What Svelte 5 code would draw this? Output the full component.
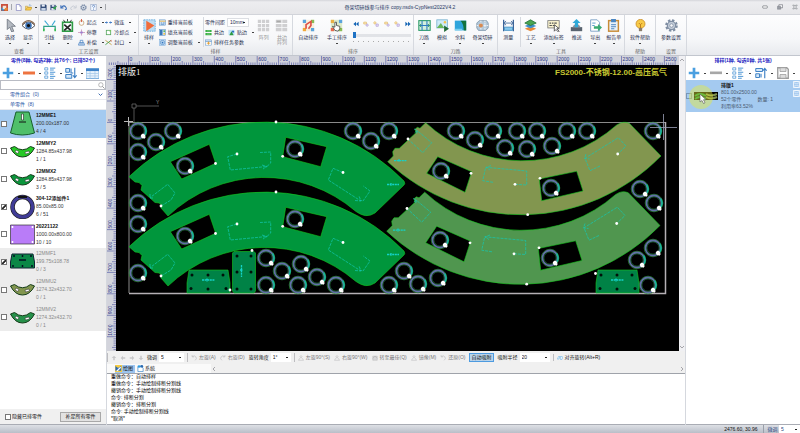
<script lang="ts">
    type Point = [number, number];

    const icons: Record<string, string> = {
        logo: `<rect width="16" height="16" fill="#c9503c"/><path d="M1 8h6v7H1z" fill="#2a8fd0"/><path d="M4 4h8v8H4z" fill="#f4e6d8"/><path d="M9 9h6v6H9z" fill="#e88b32"/>`,
        file: `<path d="M3 1h7l4 4v10H3z" fill="#fff" stroke="#7577b8" stroke-width="1.5"/><path d="M10 1v4h4" fill="none" stroke="#7577b8"/>`,
        folder: `<path d="M1 14V5h5l1 2h7v3" fill="#f5d878" stroke="#b48a26"/><path d="M1 14l4-6h11l-3 6z" fill="#f9c94a" stroke="#b48a26"/><path d="M9 3q3-3 5 1" fill="none" stroke="#4b8ed0" stroke-width="1.5"/>`,
        disk: `<path d="M1 1h12l2 2v12H1z" fill="#2d4774"/><path d="M4 1h7v5H4z" fill="#e8eef8"/><path d="M3 9h10v6H3z" fill="#c7d4e8"/>`,
        diskAs: `<path d="M1 2h12v12H1z" fill="#2d4774"/><path d="M4 2h6v4H4zM3 9h8v5H3z" fill="#dde"/><path d="M15 5l-6 6M9 7v4h4" stroke="#2fa347" stroke-width="2.5" fill="none"/>`,
        undo: `<path d="M2 3v6h6M3 8q6-7 10-1t-2 6" fill="none" stroke="#3c6fb8" stroke-width="2.4"/>`,
        redo: `<path d="M14 3v6H8M13 8Q7 1 3 7t2 6" fill="none" stroke="#c3c8d2" stroke-width="2"/>`,
        help: `<rect x="2" y="1" width="12" height="14" fill="#f4f8ff" stroke="#7088b5"/><path d="M5.500 6q0-3 2.500-3t2.500 2.500q0 2-2.500 3v1.500M8 12v1.500" fill="none" stroke="#3868b0" stroke-width="1.500"/>`,
        gearS: `<circle cx="8" cy="8" r="5" fill="#e7ebf2" stroke="#6c7f9d" stroke-width="2"/><circle cx="8" cy="8" r="7" fill="none" stroke="#6c7f9d" stroke-width="1.5" stroke-dasharray="2.500 3"/><circle cx="8" cy="8" r="2" fill="#6c7f9d"/>`,
        pointer: `<path d="M4 0v13l3-3 2.500 6 2.500-1-2.500-6H14z" fill="#b4b9c1" stroke="#6d747f"/>`,
        eye: `<path d="M0 8q8-9 16 0q-8 9-16 0z" fill="#fff" stroke="#4a4e58" stroke-width="1.200"/><path d="M0 7Q8-3 16 7" fill="none" stroke="#8b6c55" stroke-width="1.500"/><circle cx="8" cy="8" r="4" fill="#3d74b8"/><circle cx="8" cy="8" r="2" fill="#111"/>`,
        lead: `<path d="M1 14v-5h14v5" fill="none" stroke="#2fa08a" stroke-width="1.500"/><path d="M2 2l5 6M15 2l-4 6" stroke="#39a8d5" stroke-width="1.300"/><path d="M1 12v3M15 12v3" stroke="#3bbd52" stroke-width="2"/>`,
        remove: `<rect x="2" y="4" width="12" height="11" fill="none" stroke="#2e9b45" stroke-width="2"/><path d="M4 7l8 7M12 7l-8 7" stroke="#222" stroke-width="2"/><path d="M3 1l2 3M13 1l-2 3M8 0v3" stroke="#222"/>`,
        start: `<circle cx="8" cy="9" r="5.500" fill="none" stroke="#b98c4f" stroke-width="1.500"/><path d="M8 0v7" stroke="#d6523d" stroke-width="2"/>`,
        dock: `<path d="M8 1v14M0 8h16" stroke="#c27aa8" stroke-width="1.500"/><path d="M5 6h6v4H5z" fill="#9b7fd0"/>`,
        comp: `<path d="M1 14h14l-2-6H3z" fill="#d7e6f8" stroke="#3b78bd" stroke-width="1.500"/><path d="M5 8V3h6v5" fill="none" stroke="#3b78bd" stroke-width="1.500"/><path d="M4 11h8" stroke="#2259a0"/>`,
        micro: `<path d="M0 8h4M12 8h4" stroke="#2f6fc0" stroke-width="2"/><path d="M3 5l4 3-4 3zM13 5L9 8l4 3z" fill="#2f6fc0"/>`,
        cool: `<rect x="3" y="3" width="10" height="10" fill="#fff" stroke="#52a35a" stroke-width="1.800"/><circle cx="12" cy="4" r="2" fill="#79c85f"/>`,
        seal: `<path d="M1 3l14 10" stroke="#c2a03c" stroke-width="2"/><path d="M1 13L14 3" stroke="#3e9f4b" stroke-width="2"/><path d="M11 3h4v4z" fill="#d85f4c"/>`,
        nest: `<rect x="1" y="1" width="14" height="14" fill="#bddcf3" stroke="#58a3da" stroke-dasharray="2 1"/><path d="M4 2l10 6-10 7z" fill="#f06c3c"/>`,
        relay: `<rect x="1" y="2" width="14" height="12" fill="#d6e8f8" stroke="#3976b8"/><path d="M1 5h14" stroke="#f0b545" stroke-width="2"/><path d="M4 9h3M9 9h4M4 12h8" stroke="#3976b8" stroke-width="1.500"/>`,
        fill: `<rect x="1" y="1" width="14" height="14" fill="#d6e8f8" stroke="#3976b8"/><path d="M2 2h6v12H2z" fill="#3976b8"/><path d="M10 3h4v4h-4z" fill="#5ab564"/><path d="M10 9h4v4h-4z" fill="#f3c24b"/>`,
        adjust: `<rect x="1" y="1" width="14" height="14" fill="#e2effb" stroke="#5c9ad4"/><path d="M4 4h8v8H4z" fill="none" stroke="#2e74bf" stroke-width="1.500"/><circle cx="8" cy="8" r="2" fill="#2e74bf"/>`,
        common: `<path d="M1 2h14v5H1zM1 9h14v5H1z" fill="#35ae3f"/><path d="M4 4.500h8M4 11.500h8" stroke="#d4f2d4"/>`,
        hug: `<path d="M1 2h14v12H1z" fill="#bfe3f7"/><path d="M3 14l5-9 5 9z" fill="#2c9b42"/><path d="M9 4h5v4H9z" fill="#2f6fc0"/>`,
        task: `<rect x="1" y="2" width="14" height="12" fill="#fff" stroke="#4a86c2"/><path d="M1 5h14" stroke="#4a86c2" stroke-width="2"/><path d="M8 6v7M4 9.500h8" stroke="#e39b2c" stroke-width="2"/>`,
        array: `<path d="M1 1h4v4H1zM6 1h4v4H6zM11 1h4v4h-4zM1 6h4v4H1zM6 6h4v4H6zM11 6h4v4h-4zM1 11h4v4H1zM6 11h4v4H6zM11 11h4v4h-4z" fill="#cfcfd1"/>`,
        arrayC: `<path d="M1 1h7v4H1zM9 1h6v4H9zM1 6h7v4H1zM9 6h6v4H9zM1 11h7v4H1zM9 11h6v4H9z" fill="#cfcfd1"/><path d="M2 2h5v2H2z" fill="#aaa"/>`,
        autoSort: `<rect x="1" y="1" width="14" height="14" fill="#f8efdc"/><path d="M1 1h4v4H1zM11 11h4v4h-4z" fill="#5aa4dc"/><path d="M11 1h4v4h-4z" fill="#88bc55"/><path d="M1 11h4v4H1z" fill="#f1a83a"/><path d="M5 12V7l6-4v5l-3 4" fill="none" stroke="#df4e45" stroke-width="2"/>`,
        handSort: `<rect x="1" y="1" width="14" height="14" fill="#dceaca"/><path d="M1 1h4v4H1z" fill="#e9b045"/><path d="M11 1h4v4h-4z" fill="#5aa4dc"/><path d="M1 11h4v4H1z" fill="#e7694d"/><path d="M11 11h4v4h-4z" fill="#88bc55"/><path d="M6 14l-3-5 3 1V4h2v4l4 1v3l-2 3z" fill="#fff" stroke="#444"/>`,
        first: `<path d="M8 2v12L1 8zM15 2v12L8 8z" fill="#1565b5"/>`,
        last: `<path d="M1 2v12l7-6zM8 2v12l7-6z" fill="#1565b5"/>`,
        stepA: `<path d="M2 3h7v5H2z" fill="#fff3d0" stroke="#d9a53e" stroke-width="1.500"/><circle cx="11" cy="11" r="3" fill="#efe7ff" stroke="#9d87cc" stroke-width="1.500"/>`,
        stepB: `<circle cx="5" cy="5" r="3" fill="#fff3d0" stroke="#d9a53e" stroke-width="1.500"/><path d="M8 8h6v6H8z" fill="#efe7ff" stroke="#9d87cc" stroke-width="1.500"/>`,
        toolpath: `<rect x="1" y="2" width="14" height="12" fill="#d3f0df" stroke="#2d9c68" stroke-width="1.300"/><path d="M5 2v12M11 2v12M2 8h12" stroke="#2d7dc0" stroke-width="1.300"/><path d="M4 6l-2 2 2 2M12 6l2 2-2 2" fill="none" stroke="#188a45"/>`,
        simulate: `<rect x="1" y="1" width="13" height="10" fill="#cdeaf8" stroke="#79b2cf"/><path d="M1 11l5-6 4 6z" fill="#68b659"/><path d="M10 8l6 4-6 4z" fill="#216b37"/><circle cx="11" cy="4" r="1.500" fill="#f3c24b"/>`,
        remnant: `<rect x="1" y="2" width="14" height="12" fill="#2fa5dc"/><path d="M8 2h7v12h-3q0-8-4-12z" fill="#12733e"/><path d="M1 12h9v2H1z" fill="#78d0f0"/>`,
        skeleton: `<path d="M1 5l3-3h9l2 3v6l-3 3H3l-2-3z" fill="#b5c9da" stroke="#7d95aa"/><path d="M1 8h14M6 2v12M11 2v12" stroke="#fff" stroke-dasharray="2 1"/><circle cx="6" cy="8" r="2.500" fill="#d68a52"/>`,
        measure: `<path d="M2 1v14M14 1v14" stroke="#3a6398" stroke-width="1.500"/><path d="M2 5h12M5 2.500L2 5l3 2.500M11 2.500L14 5l-3 2.500" fill="none" stroke="#3a6398"/><path d="M3 10h10v4H3z" fill="#86c8ed" stroke="#3a8ac0"/>`,
        layers: `<path d="M1 12l7-3 7 3-7 3z" fill="#e98b3b"/><path d="M1 8.500l7-3 7 3-7 3z" fill="#3a8fd0"/><path d="M1 5l7-4 7 4-7 3z" fill="#4aa552" stroke="#28743a"/>`,
        tag: `<rect x="1" y="2" width="14" height="9" fill="#fbf4cf" stroke="#777"/><path d="M3 5h2M6 5h2M9 5h3M3 8h3M7 8h3" stroke="#555" stroke-width="1.500"/><path d="M9 7v8l2-2 3 3 1-1-3-3h3z" fill="#fff" stroke="#444"/>`,
        push: `<path d="M1 10h14v5H1z" fill="#59636f"/><path d="M3 10l2-3h6l2 3z" fill="#89939f"/><path d="M6 10V5H3l5-5 5 5h-3v5z" fill="#2fa9d8"/>`,
        exportI: `<path d="M2 1h8l3 3v11H2z" fill="#fff" stroke="#6c95bf"/><path d="M4 5h4M4 8h3" stroke="#3a8ac0"/><path d="M6 9h5V6l5 4.500-5 4.500v-3H6z" fill="#39aa72"/>`,
        report: `<rect x="2" y="2" width="12" height="13" fill="#e8f2fb" stroke="#c98c37" stroke-width="1.800"/><path d="M5 0h6v4H5z" fill="#4a86c2"/><path d="M5 7h6M5 9.500h6M5 12h4" stroke="#4a86c2" stroke-width="1.200"/>`,
        bulb: `<circle cx="8" cy="6" r="5.500" fill="#f8ca48" stroke="#c78a22"/><path d="M6 11h4v4H6z" fill="#8a7d6c"/><path d="M6 5l2 2 2-2M8 7v4" stroke="#b46f12" fill="none"/>`,
        gear: `<circle cx="8" cy="8" r="6" fill="none" stroke="#7f8ea3" stroke-width="3.500" stroke-dasharray="2.700 2"/><circle cx="8" cy="8" r="5" fill="#c7d0dc" stroke="#7f8ea3" stroke-width="1.500"/><circle cx="8" cy="8" r="2.200" fill="#f5f6f8" stroke="#7f8ea3"/>`,
        plus: `<path d="M6.200 1h3.600v5.200H15v3.600H9.800V15H6.200V9.800H1V6.200h5.200z" fill="#4a9fe0"/>`,
        minus: `<path d="M0 6h16v4H0z" fill="#ee7440"/>`,
        minusG: `<path d="M0 6h16v3.500H0z" fill="#a7a7a7"/>`,
        rows: `<path d="M1 1h4v3H1zM1 6.500h4v3H1zM1 12h4v3H1z" fill="#fff" stroke="#4b94d4"/><path d="M8 1.500h7M8 4h5M8 7h7M8 9.500h5M8 12.500h7M8 15h5" stroke="#4b94d4" stroke-width="1.300"/>`,
        sortDown: `<path d="M1 2h5v5H1zM1 10h8v5H1z" fill="#d5e8f8" stroke="#3c7fc4" stroke-width="1.300"/><path d="M8 2v6h3M13 1v13M10.500 11l2.500 3 2.500-3" fill="none" stroke="#3c7fc4" stroke-width="1.500"/>`,
        sortUp: `<path d="M1 2h9v4H1zM1 9h5v5H1z" fill="#d5e8f8" stroke="#3c7fc4" stroke-width="1.300"/><path d="M13 15V2M10.500 5L13 2l2.500 3M8 9v5" fill="none" stroke="#3c7fc4" stroke-width="1.500"/>`,
        table: `<rect x="0" y="2" width="16" height="12" fill="#e9f3fc" stroke="#5e9dd6"/><path d="M0 2h16v3H0z" fill="#3f83c8"/><path d="M0 8h16M0 11h16M5 5v9M11 5v9" stroke="#a9cbea"/>`,
        save: `<path d="M1 1h12l2 2v12H1z" fill="#fff" stroke="#9b9b9b" stroke-width="1.800"/><path d="M4 1h8v5H4zM4 10h8v5H4z" fill="#ddd" stroke="#9b9b9b"/>`,
        saveW: `<path d="M1 1h14v14H1z" fill="none" stroke="#fff" stroke-width="1.800"/><path d="M4 1h8v5H4zM4 10h8v5H4z" fill="none" stroke="#fff"/>`,
        search: `<circle cx="6.500" cy="6.500" r="5" fill="none" stroke="#8b8b8b" stroke-width="1.300"/><path d="M10 10l5 5" stroke="#8b8b8b" stroke-width="2"/>`,
        up: `<path d="M8 2l6 6h-4v6H6V8H2z" fill="#c6c6c8"/>`,
        left: `<path d="M2 8l6-6v4h6v4H8v4z" fill="#c6c6c8"/>`,
        right: `<path d="M14 8l-6 6v-4H2V6h6V2z" fill="#c6c6c8"/>`,
        down: `<path d="M8 14L2 8h4V2h4v6h4z" fill="#c6c6c8"/>`,
        rotL: `<path d="M4 4q5-4 9 1t-2 9M3 0v5h5" fill="none" stroke="#b4b4b6" stroke-width="1.500"/>`,
        rotR: `<path d="M12 4Q7 0 3 5t2 9M13 0v5H8" fill="none" stroke="#b4b4b6" stroke-width="1.500"/>`,
        tri: `<path d="M1 14h14L8 5zM4 4q4-4 8 0" fill="none" stroke="#b9b9bb" stroke-width="1.500"/>`,
        best: `<path d="M2 3h12v11H2z" fill="#d8d8da" stroke="#aaa"/><path d="M2 9l6-6 6 6" fill="none" stroke="#999"/>`,
        align: `<path d="M1 11L4 4h4l-3 7zM9 12V4h5q2 4-1 8z" fill="#eaf5fd" stroke="#5ba9df" stroke-width="1.300"/>`,
        pen: `<rect width="16" height="16" fill="#f5cb44"/><path d="M1 2l6 5 7-5v11H1z" fill="#2a68b4"/><path d="M3 13l9-9 2 2-8 8z" fill="#fff"/>`,
        sys: `<path d="M2 3h8l4 4v8H2z" fill="#fff" stroke="#2c7fc7" stroke-width="1.500"/><path d="M2 1h6v5H2z" fill="#2c9ae0"/><circle cx="11" cy="3" r="3" fill="#2a69b0"/>`,
        winMin: `<rect x="2" y="5" width="12" height="6" rx="1" fill="#fff" stroke="#6f7279" stroke-width="1.800"/>`,
        winMax: `<path d="M5 2h10v8H5z" fill="#fff" stroke="#6b6f78" stroke-width="1.800"/><path d="M1 6h9v8H1z" fill="#999da5" stroke="#6b6f78"/>`,
        winClose: `<path d="M2 3h4l2 3 2-3h4l-4 5 4 5h-4l-2-3-2 3H2l4-5z" fill="#fff" stroke="#6f7279" stroke-width="1.500"/>`
    };

    const smallCraftA = [["start", "起点", true], ["dock", "停靠", false], ["comp", "补偿", true]] as const;
    const smallCraftB = [["micro", "微连", true], ["cool", "冷却点", true], ["seal", "封口", true]] as const;
    const smallNest = [["relay", "重排当前板", false], ["fill", "填充当前板", false], ["adjust", "调整当前板", true]] as const;
    const pathTools = [["toolpath", "刀路", true], ["simulate", "模拟", false], ["remnant", "余料", true], ["skeleton", "骨架切碎", true]] as const;
    const tools = [["layers", "工艺", true], ["tag", "添加标签", true], ["push", "推送", false], ["exportI", "导出", true], ["report", "报告单", true]] as const;

    const parts = [
        { name: "12MME1", size: "200.00x187.00", count: "4 / 4", kind: "skirt", color: "#4fbf6a", checked: false },
        { name: "12MMY2", size: "1284.85x437.98", count: "1 / 1", kind: "arc", color: "#26c926", checked: false },
        { name: "12MMX2", size: "1284.85x437.98", count: "3 / 5", kind: "arc", color: "#0a963c", checked: false },
        { name: "304-12添加件1", size: "85.00x85.00", count: "6 / 51", kind: "ring", color: "#403c96", checked: true },
        { name: "20221122", size: "1000.00x800.00", count: "10 / 10", kind: "rect", color: "#b97cf8", checked: false },
        { name: "12MMF1", size: "199.75x108.78", count: "0 / 3", kind: "plate", color: "#0b8746", checked: true, done: true },
        { name: "12MMU2", size: "1274.32x432.70", count: "0 / 1", kind: "arc", color: "#82964f", checked: false, done: true },
        { name: "12MMV2", size: "1274.32x432.70", count: "0 / 1", kind: "arc", color: "#26914a", checked: false, done: true }
    ];

    const log = [
        "重做命令：自动排样",
        "重做命令：手动绘制排断分割线",
        "撤销命令：手动绘制排断分割线",
        "命令: 排断分割",
        "撤销命令：排断分割",
        "命令: 手动绘制排断分割线",
        "*取消*"
    ];

    // sheet origin and scale: 100 mm is a bit over 21 units on the canvas
    const ox = 128.6;
    const oy = 122.4;
    const step = 21.43;

    const hMarks = Array.from({ length: 26 }, (_, i) => ({ label: i * 100, at: ox + i * step }));
    const vMarks = Array.from({ length: 13 }, (_, i) => ({ label: (i - 2) * 100, at: oy + (i - 2) * step }));

    let hTicks = "";
    for (let i = -9; i < 256; i++) hTicks += `M${(ox + i * step / 10).toFixed(1)} 65v-${i % 10 === 0 ? 9 : i % 5 === 0 ? 4 : 2.5}`;
    let vTicks = "";
    for (let i = -26; i < 107; i++) vTicks += `M116 ${(oy + i * step / 10).toFixed(1)}h-${i % 10 === 0 ? 9 : i % 5 === 0 ? 4 : 2.5}`;

    const rings: Point[] = [
        [138, 131], [173, 131], [156, 142], [138, 152], [185, 166], [295, 149], [185, 236], [295, 219],
        [138, 203], [138, 224], [138, 273], [266, 258], [282, 271], [301, 264], [317, 277], [266, 285],
        [298, 285], [336, 285], [389, 285], [404, 271], [418, 284], [438, 278], [353, 131], [371, 141],
        [389, 131], [456, 131], [475, 140], [493, 131], [517, 131], [537, 131], [567, 131], [587, 131],
        [505, 148], [527, 149], [552, 146], [653, 131], [640, 189], [654, 203], [653, 248], [637, 260],
        [648, 285], [441, 171], [551, 188], [440, 240], [550, 258]
    ];

    const archBody = "M129 176.7A195 195 0 0 1 404 181Q406 184 403 186L375 213Q366 219 356 211.5A140 140 0 0 0 168 216L161 208 162 205 159 203 155 202.5 141 190 142 185.5 139 182.500 135 182ZM170.3 161.7L181.7 179 215.7 163.3 209.3 144.3ZM285.7 137.3L282.7 156.7 320.7 166.7 326.7 146.7Z";
    const archMarks = "M237 154L227.700 156.700 230.300 170 267 166.500 270.700 163V152L260 152.500M262 165l5 1.500-4 2.500M161 206L171 200 175 193 167.700 184.300 150 197.700M150 194v4h4M343 172.500L333 168.300 328.300 180 359.300 200 363 201 370 191 363.300 186M355 200.500l6 .5-2-5";
    const archDots: Point[] = [[276, 122], [215.5, 163.5], [237, 154], [282.7, 156.3], [343, 172.5], [161, 206]];

    const bowlBody = "M387.700 161.700A195 195 0 0 0 661 156L629.300 123.300Q623 120.500 616.700 125A142 142 0 0 1 425.700 122.700L420 128.300 417.300 127.300 415 129.300 416 132.700 399.300 148.300H395L392.700 151.700 393.300 156ZM437.700 156.700L471.700 171.700 465 192.300 426.700 173.300ZM539.300 179L576.700 171.300 583 191 541.700 200.700Z";
    const bowlMarks = "M408 139L422.700 152.700 431.700 142.700 417.300 130.700 414 133M414 129l3.500 1.500-1 4M493 182.300L482.700 180.700 485.700 167.300 526.700 171V185L515 184.300M491 165.500l-5 2 4 2.500M600 166L590 170.700 585 158.300 618.300 137.700 626 146 617.700 154M586 154l-1.500 4.500 5 .5";
    const bowlDots: Point[] = [[527.7, 214.700], [471, 173.3], [408, 139], [515, 184.3], [540, 178.3], [617.7, 154]];

    const plateDots: Point[] = [[4, 5], [20, 5], [35, 5], [3, 18.500], [20, 19], [38, 18.5]];
    const thumbs = [[0, "#0a963c"], [1, "#82964f"]] as const;

    let hidePlaced = $state(false);
    let query = $state("");
    let speed = $state(0);
    let layoutChecked = $state(false);
</script>

{#snippet icon(name: string, size: string)}
    <svg class="icon {size}" viewBox="0 0 16 16" aria-hidden="true">{@html icons[name]}</svg>
{/snippet}

{#snippet big(name: string, label: string, menu: boolean)}
    <button class="big" class:wide={label.length > 3}>
        {@render icon(name, "i13")}
        <span>{label}</span>
        {#if menu}<i class="caret"></i>{/if}
    </button>
{/snippet}

{#snippet small(name: string, label: string, menu: boolean)}
    <button class="small">
        {@render icon(name, "i7")}
        <span>{label}</span>
        {#if menu}<i class="caret"></i>{/if}
    </button>
{/snippet}

{#snippet tool(name: string)}
    <button class="tool" aria-label={name}>{@render icon(name, "i12")}</button>
    <i class="caret"></i>
{/snippet}

{#snippet arch(dy: number)}
    <g transform="translate(0 {dy})">
        <path d={archBody} fill="#00963c" fill-rule="evenodd" stroke="#16c81e" stroke-width=".6" />
        <path d={archMarks} class="marks" />
        <path d="M387 184.500h12M391 183v3" class="label-mark" />
        {#each archDots as [x, y]}<circle cx={x} cy={y} r="1.400" fill="#fff" />{/each}
    </g>
{/snippet}

{#snippet bowl(dx: number, dy: number, fill: string)}
    <g transform="translate({dx} {dy})">
        <path d={bowlBody} {fill} fill-rule="evenodd" stroke="#16c81e" stroke-width=".6" />
        <path d={bowlMarks} class="marks" />
        <path d="M394 160.700h13M399 159v3" class="label-mark" />
        {#each bowlDots as [x, y]}<circle cx={x} cy={y} r="1.400" fill="#fff" />{/each}
    </g>
{/snippet}

{#snippet plate(x: number, y: number)}
    <g transform="translate({x} {y})">
        <path d="M2 0H41L43 13V23H0V13Z" fill="#008246" stroke="#16c81e" stroke-width=".6" />
        {#each plateDots as [px, py]}<circle cx={px + 1} cy={py} r="1.500" fill="#001008" />{/each}
        <path d="M15 10h13M20 8.500v3" class="label-mark" />
    </g>
{/snippet}

<div class="app">
    <header class="titlebar">
        <div class="quick">
            {@render icon("logo", "i7")}
            <i class="bar"></i>
            {@render icon("file", "i7")}
            {@render icon("folder", "i7")}
            <i class="caret"></i>
            {@render icon("disk", "i7")}
            {@render icon("diskAs", "i7")}
            {@render icon("undo", "i7")}
            {@render icon("redo", "i7")}
            {@render icon("gearS", "i7")}
            {@render icon("help", "i7")}
            <i class="caret"></i>
            <i class="bar"></i>
        </div>
        <h1>骨架切碎线参与排序 copy.nsds-CypNest2022V4.2</h1>
        <div class="window-buttons">
            {@render icon("winMin", "i6")}
            {@render icon("winMax", "i6")}
            {@render icon("winClose", "i6")}
        </div>
    </header>

    <nav class="ribbon">
        <section>
            <div class="tools">
                {@render big("pointer", "选择", true)}
                {@render big("eye", "显示", true)}
            </div>
            <h2>查看</h2>
        </section>
        <section>
            <div class="tools">
                {@render big("lead", "引线", true)}
                {@render big("remove", "删除", true)}
                <div class="stack">
                    {#each smallCraftA as [i, label, menu]}{@render small(i, label, menu)}{/each}
                </div>
                <div class="stack">
                    {#each smallCraftB as [i, label, menu]}{@render small(i, label, menu)}{/each}
                </div>
            </div>
            <h2>工艺设置</h2>
        </section>
        <section>
            <div class="tools">
                {@render big("nest", "排样", true)}
                <div class="stack split">
                    {#each smallNest as [i, label, menu]}{@render small(i, label, menu)}{/each}
                </div>
                <div class="stack">
                    <label class="small">零件间距
                        <select><option>10mm</option></select>
                    </label>
                    <div class="pair">
                        {@render small("common", "共边", false)}
                        {@render small("hug", "贴边", true)}
                    </div>
                    {@render small("task", "排样任务参数", false)}
                </div>
                <button class="big" disabled>{@render icon("array", "i13")}<span>阵列</span></button>
                <button class="big" disabled>{@render icon("arrayC", "i13")}<span>共边<br />阵列</span></button>
            </div>
            <h2>排样</h2>
        </section>
        <section>
            <div class="tools">
                {@render big("autoSort", "自动排序", false)}
                {@render big("handSort", "手工排序", true)}
                <div class="order">
                    <div class="steps">
                        {#each ["first", "stepA", "stepB", "stepA", "stepB", "last"] as s}{@render icon(s, "i6")}{/each}
                    </div>
                    <input type="range" min="0" max="100" bind:value={speed} aria-label="排序" />
                    <div class="dots"></div>
                </div>
            </div>
            <h2>排序</h2>
        </section>
        <section>
            <div class="tools">
                {#each pathTools as [i, label, menu]}{@render big(i, label, menu)}{/each}
            </div>
            <h2>刀路</h2>
        </section>
        <section>
            <div class="tools">
                <div class="split">{@render big("measure", "测量", false)}</div>
                {#each tools as [i, label, menu]}{@render big(i, label, menu)}{/each}
            </div>
            <h2>工具</h2>
        </section>
        <section>
            <div class="tools">{@render big("bulb", "软件帮助", true)}</div>
            <h2>帮助</h2>
        </section>
        <section>
            <div class="tools">{@render big("gear", "参数设置", false)}</div>
            <h2>设置</h2>
        </section>
    </nav>

    <main>
        <aside class="parts">
            <h3>零件(8种, 勾选2种; 共76个; 已排52个)</h3>
            <div class="toolbar">
                {@render tool("plus")}
                {@render tool("minus")}
                {@render tool("rows")}
                {@render tool("sortDown")}
                <button class="tool" aria-label="table">{@render icon("table", "i13")}</button>
            </div>
            <label class="search">
                <input type="text" bind:value={query} aria-label="搜索" />
                {@render icon("search", "i7")}
            </label>
            <div class="category">零件组合&nbsp; (0) <svg viewBox="0 0 8 6"><path d="M1 1l3 3 3-3" /></svg></div>
            <div class="category">单零件&nbsp; (8)</div>
            <ul>
                {#each parts as part, i}
                    <li class:selected={i === 0} class:done={part.done}>
                        <input type="checkbox" checked={part.checked} aria-label={part.name} />
                        <svg class="thumb" viewBox="0 0 25 25">
                            {#if part.kind === "skirt"}
                                <path d="M6 1H19L24.500 22Q12 26 .5 22Z" fill={part.color} stroke="#165e2b" />
                                <path d="M11.500 3h2v6h-2z" fill="#fff" stroke="#222" stroke-width=".6" />
                                <path d="M9 11h7" stroke="#111" />
                            {:else if part.kind === "arc"}
                                <path d="M.5 9L4.500 7.500Q12.500 14 20.500 7.500L24.500 9Q20 18 12.500 18T.5 9Z" fill={part.color} stroke="#173d1b" />
                                <path d="M6 11l3 1.500-1 2-3-1.500zM15 13l4-1 .5 2-4 1z" fill="#fff" stroke="#222" stroke-width=".5" />
                            {:else if part.kind === "ring"}
                                <circle cx="12.500" cy="13" r="10" fill="#fff" stroke="#222" stroke-width="4.500" />
                                <circle cx="12.500" cy="13" r="10" fill="none" stroke={part.color} stroke-width="3.200" />
                                <path d="M8 2h9v2H8z" fill="#111" />
                            {:else if part.kind === "rect"}
                                <path d="M.5 3h24v19H.5z" fill={part.color} stroke="#333" stroke-width=".7" />
                                <path d="M2.500 4v2M22.500 4v2M2.500 19v2M22.500 19v2" stroke="#fff" stroke-width="1.500" />
                            {:else}
                                <path d="M2 5H23L24.500 13V19H.5V13Z" fill={part.color} stroke="#123" />
                                <path d="M4 6v2M21 6v2M3 16v2M22 16v2M12.500 6v2M12.500 16v2M9 11h7" stroke="#012" stroke-width="1.500" />
                            {/if}
                        </svg>
                        <div class="info">
                            <b>{part.name}</b>
                            <span>{part.size}</span>
                            <span>{part.count}</span>
                        </div>
                    </li>
                {/each}
            </ul>
            <footer>
                <label><input type="checkbox" bind:checked={hidePlaced} />隐藏已排零件</label>
                <button>补足所有零件</button>
            </footer>
        </aside>

        <div class="center">
            <div class="workspace">
                <svg class="ruler-h" viewBox="107 56 572 9" preserveAspectRatio="xMinYMin">
                    <path d={hTicks} class="tick" />
                    {#each hMarks as m}<text x={m.at + 1} y="61">{m.label}</text>{/each}
                </svg>
                <svg class="ruler-v" viewBox="107 65 9 286" preserveAspectRatio="xMinYMin">
                    <path d={vTicks} class="tick" />
                    {#each vMarks as m}<text transform="translate(112 {m.at - 1}) rotate(-90)">{m.label}</text>{/each}
                </svg>
                <svg class="canvas" viewBox="116 65 563 286" preserveAspectRatio="xMinYMin">
                    <text x="118" y="75" class="sheet-name">排版1</text>
                    <text x="555" y="75" class="sheet-info">FS2000-不锈钢-12.00-高压氮气</text>
                    <path d="M132 104h4v4h-4zM136 106h23M134 108v14" class="axis" />
                    <text x="156" y="104" class="axis-name">Y</text>
                    <path d="M129 293V122.500H665.500" fill="none" stroke="#8a8a8a" />
                    <path d="M129 293.500H665.500V122" fill="none" stroke="#b5b0b5" stroke-width="1.500" />
                    {@render bowl(0, 0, "#82964f")}
                    {@render bowl(-1, 69.5, "#50964f")}
                    {@render arch(0)}
                    {@render arch(70)}
                    {@render plate(187, 270)}
                    {@render plate(596, 270)}
                    <path d="M234 251.500H254L255.500 253V291L254 293H234L232.500 291V253Z" fill="#008246" stroke="#16c81e" stroke-width=".6" />
                    {#each [256, 272, 289] as y}
                        <circle cx="237" cy={y} r="1.500" fill="#001008" />
                        <circle cx="251" cy={y} r="1.500" fill="#001008" />
                    {/each}
                    <path d="M241.500 265v12M240 270h3" class="label-mark" />
                    <circle cx="252" cy="250.500" r="1.400" fill="#fff" />
                    <circle cx="230" cy="290" r="1.400" fill="#fff" />
                    <circle cx="595.500" cy="273.500" r="1.400" fill="#fff" />
                    {#each rings as [x, y]}
                        <g transform="translate({x} {y})">
                            <circle r="8.800" fill="none" stroke="#2c9a34" stroke-width=".7" />
                            <circle r="7.500" fill="none" stroke="#6270a8" stroke-width="1.800" />
                            <circle r="6.200" fill="none" stroke="#2f9a50" stroke-width=".6" />
                            <path d="M6.500-4.500A8 8 0 0 1 7 4" fill="none" stroke="#16b99a" stroke-width="1.500" />
                            <path d="M3.500 3.500L7 7M3.500 6.500l3-3" stroke="#fff" stroke-width="2.500" />
                        </g>
                    {/each}
                    <path d="M124 121.500h9M128.500 117v9" stroke="#b8b8b8" />
                    <path d="M650 127.500h27M663.500 114v26" stroke="#9aa0b8" stroke-width=".8" />
                </svg>
                <div class="scroll-v">
                    <svg viewBox="0 0 6 6"><path d="M1 4l2-2 2 2" /></svg>
                    <svg viewBox="0 0 6 6"><path d="M1 2l2 2 2-2" /></svg>
                </div>
            </div>

            <div class="actions">
                <div class="cluster">
                    {#each ["up", "left", "right", "down"] as a}
                        <button aria-label={a}>{@render icon(a, "i6")}</button>
                    {/each}
                    <label>微调 <select><option>5</option></select></label>
                </div>
                <div class="cluster">
                    <button disabled>{@render icon("rotL", "i6")}左旋(A)</button>
                    <button disabled>{@render icon("rotR", "i6")}右旋(D)</button>
                    <label>旋转角度 <select class="short"><option>1°</option></select></label>
                </div>
                <div class="cluster">
                    <button disabled>{@render icon("tri", "i6")}左旋90°(S)</button>
                    <button disabled>{@render icon("tri", "i6")}右旋90°(W)</button>
                    <button disabled>{@render icon("best", "i6")}转至最佳(Q)</button>
                    <button disabled>{@render icon("tri", "i6")}镜像(M)</button>
                    <button disabled>{@render icon("rotL", "i6")}还原(O)</button>
                    <button class="on">自动吸附</button>
                    <label>吸附半径 <select class="long"><option>20</option></select></label>
                </div>
                <div class="cluster">
                    <button>{@render icon("align", "i6")}对齐旋转(Alt+R)</button>
                </div>
            </div>

            <div class="tabs">
                <button class="active">{@render icon("pen", "i7")}绘图</button>
                <button>{@render icon("sys", "i7")}系统</button>
                <div class="scroll-h">
                    <svg viewBox="0 0 6 6"><path d="M4 1L2 3l2 2" /></svg>
                    <svg viewBox="0 0 6 6"><path d="M2 1l2 2-2 2" /></svg>
                </div>
            </div>
            <div class="log">
                {#each log as line}<p>{line}</p>{/each}
            </div>
        </div>

        <aside class="layouts">
            <h3>排样(1种, 勾选0种, 共1张)</h3>
            <div class="toolbar">
                {@render tool("plus")}
                {@render tool("minusG")}
                {@render tool("rows")}
                {@render tool("sortUp")}
                {@render tool("save")}
            </div>
            <div class="layout-item">
                <input type="checkbox" bind:checked={layoutChecked} aria-label="排版1" />
                <div class="preview">
                    <svg viewBox="0 0 24 8">
                        <rect width="24" height="8" fill="#000" />
                        {#each thumbs as [i, color]}
                            <g fill="none" stroke={color} stroke-width="2">
                                <path d={i === 0 ? "M1 4q5-4 11 0M1 7q5-4 11 0" : "M12 2q5 3 11 0M12 5q5 3 11 0"} />
                            </g>
                        {/each}
                    </svg>
                    <svg class="cursor" viewBox="0 0 26 26">
                        <circle cx="13" cy="13" r="12" fill="#e6ec3c" opacity=".45" />
                        <path d="M12 10v8l2-1.500 1.500 3 1.500-.7-1.500-3H18z" fill="#fff" stroke="#555" stroke-width=".6" />
                    </svg>
                </div>
                <div class="info">
                    <b>排版1</b>
                    <span>801.00x2500.00</span>
                    <span class="spread">52个零件 <em>数量: 1</em></span>
                    <span>利用率63.52%</span>
                </div>
                <div class="item-tools">
                    {@render icon("saveW", "i7")}
                    {@render icon("saveW", "i7")}
                </div>
            </div>
        </aside>
    </main>

    <div class="status">
        <span>2476.60, 30.96</span>
        <label>微调 <select><option>5</option></select></label>
    </div>
</div>

<style>
    :global(body) {
        margin: 0;
    }

    .app {
        display: flex;
        flex-direction: column;
        height: 100vh;
        overflow: hidden;
        background: #eceef2;
        color: #111;
        font-family: "Liberation Sans", "Noto Sans CJK SC", sans-serif;
        font-size: 5px;
        line-height: 7px;
        white-space: nowrap;
    }

    h1, h2, h3, p, ul {
        margin: 0;
        padding: 0;
        font-size: 5px;
        font-weight: normal;
    }

    button, select, input {
        margin: 0;
        padding: 0;
        border: 0;
        border-radius: 0;
        background: none;
        color: inherit;
        font-family: inherit;
        font-size: 5px;
        line-height: 7px;
    }

    select {
        appearance: none;
        width: 25px;
        height: 9px;
        padding-left: 2px;
        background: linear-gradient(#222, #222) no-repeat right 3px center / 2px 1px, #fff;
    }

    input[type="checkbox"] {
        appearance: none;
        flex: none;
        box-sizing: border-box;
        width: 6px;
        height: 6px;
        border: 1px solid #777;
        background: #fff;
    }

    input[type="checkbox"]:checked {
        background: linear-gradient(135deg, #fff 25%, #222 45%, #222 60%, #fff 75%);
    }

    .icon {
        display: block;
        flex: none;
    }

    .i6 { width: 6px; height: 6px; }
    .i7 { width: 7px; height: 7px; }
    .i12 { width: 12px; height: 12px; }
    .i13 { width: 13px; height: 13px; }

    .caret {
        flex: none;
        width: 2px;
        height: 1px;
        background: #444;
    }

    .titlebar {
        display: grid;
        grid-template-columns: 1fr auto 1fr;
        align-items: center;
        height: 14px;
        flex: none;
        border-bottom: 1px solid #d2d4da;
        background: linear-gradient(#d4d5da 0, #ededf0 2px, #e6e6e9);
    }

    .quick {
        display: flex;
        align-items: center;
        gap: 3px;
        padding-left: 1px;
    }

    .bar {
        width: 1px;
        height: 6px;
        background: #a5a7ad;
    }

    h1 {
        color: #1f3764;
    }

    .window-buttons {
        display: flex;
        justify-content: flex-end;
        gap: 9px;
        padding-right: 2px;
    }

    .ribbon {
        display: grid;
        grid-template-columns: 39px 100px 154px 121px 84px 127px 31px 31px;
        flex: none;
        height: 40px;
        border-bottom: 1px solid #c2c6ce;
        background: linear-gradient(#fdfdfe, #f6f7f9 60%, #e8eaee);
        color: #1f2d4c;
    }

    section {
        display: flex;
        flex-direction: column;
        justify-content: space-between;
        box-sizing: border-box;
        border-right: 1px solid #d6d9df;
    }

    section h2 {
        color: #666;
        text-align: center;
    }

    .tools {
        display: flex;
        justify-content: space-around;
        height: 30px;
        padding: 2px 1px 0;
    }

    .big {
        display: flex;
        flex-direction: column;
        align-items: center;
        width: 17px;
        padding-top: 2px;
    }

    .big.wide {
        width: 26px;
    }

    .big span {
        line-height: 5px;
        padding-top: 3px;
    }

    .big .caret {
        margin-top: 3px;
    }

    .big:disabled {
        color: #999;
    }

    .stack {
        display: flex;
        flex-direction: column;
        justify-content: space-between;
    }

    .split {
        padding-right: 3px;
        border-right: 1px solid #d6d9df;
    }

    .small {
        display: flex;
        align-items: center;
        gap: 2px;
        height: 10px;
    }

    .small .caret {
        margin-left: 3px;
    }

    .small select {
        width: 22px;
        border: 1px solid #dcdee3;
        box-sizing: border-box;
    }

    .pair {
        display: flex;
        gap: 4px;
    }

    .order {
        display: flex;
        flex-direction: column;
        gap: 5px;
        width: 58px;
        padding-top: 4px;
    }

    .steps {
        display: flex;
        justify-content: space-between;
    }

    .order input {
        appearance: none;
        width: 100%;
        height: 6px;
        background: linear-gradient(#e1e3e7, #e1e3e7) no-repeat center / 100% 3px;
    }

    .order input::-webkit-slider-thumb {
        appearance: none;
        width: 3px;
        height: 6px;
        background: #1e72c4;
    }

    .dots {
        height: 1px;
        margin-top: -2px;
        background: repeating-linear-gradient(90deg, #aaa 0 1px, transparent 1px 5px);
    }

    main {
        display: grid;
        grid-template-columns: 106px 1fr 114px;
        gap: 1px;
        flex: 1;
        min-height: 0;
        background: #d5d8de;
    }

    aside {
        display: flex;
        flex-direction: column;
        min-height: 0;
        background: #fff;
        border-bottom: 1px solid #a9acb4;
    }

    h3 {
        height: 10px;
        line-height: 9px;
        color: #2019c0;
        font-weight: bold;
        text-align: center;
    }

    .toolbar {
        display: flex;
        align-items: center;
        justify-content: space-between;
        height: 14px;
        padding: 0 7px 0 2px;
    }

    .search {
        display: flex;
        align-items: center;
        height: 8px;
        border: 1px solid #b9bcc4;
    }

    .search input {
        flex: 1;
        min-width: 0;
        height: 7px;
    }

    .category {
        display: flex;
        align-items: center;
        height: 9px;
        padding-left: 10px;
        border-bottom: 1px solid #e8eaef;
        color: #1f55a4;
    }

    .category svg {
        width: 5px;
        margin: 0 3px 0 auto;
    }

    .category path, .scroll-v path, .scroll-h path {
        fill: none;
        stroke: #3767ae;
        stroke-width: 1.500;
    }

    ul {
        display: flex;
        flex-direction: column;
        height: 221px;
        list-style: none;
    }

    li {
        display: flex;
        align-items: center;
        flex: 1;
        min-height: 0;
        gap: 3px;
        padding-left: 1px;
    }

    .selected {
        background: #a4caf0;
    }

    .thumb {
        width: 25px;
        height: 25px;
    }

    .info {
        display: flex;
        flex-direction: column;
        color: #333;
    }

    .info b {
        color: #111;
    }

    .done {
        background: #ececec;
    }

    .done .info, .done .info b {
        color: #888;
        font-weight: normal;
    }

    li .info {
        gap: 1px;
        margin-left: -2px;
    }

    footer {
        display: flex;
        align-items: center;
        justify-content: space-between;
        height: 15px;
        margin-top: auto;
        padding: 0 5px;
        background: #f0f0f0;
    }

    footer label {
        display: flex;
        align-items: center;
        gap: 1px;
    }

    footer button {
        width: 41px;
        height: 10px;
        border: 1px solid #a8a8a8;
        background: #e2e2e2;
        line-height: 5px;
    }

    .center {
        display: flex;
        flex-direction: column;
        min-width: 0;
        min-height: 0;
        background: #fff;
    }

    .workspace {
        display: grid;
        grid-template: 9px minmax(0, 1fr) / 9px minmax(0, 1fr) 6px;
        flex: 1;
        min-height: 0;
        background: #d3d4dc;
    }

    .workspace > svg {
        display: block;
        width: 100%;
        height: 100%;
    }

    .ruler-h {
        grid-area: 1 / 1 / 2 / 3;
    }

    .ruler-v {
        grid-area: 2 / 1;
    }

    .canvas {
        grid-area: 2 / 2;
        background: #000;
    }

    .scroll-v {
        grid-area: 1 / 3 / 3 / 4;
        display: flex;
        flex-direction: column;
        justify-content: space-between;
        background: #f0f0f3;
    }

    .scroll-v path, .scroll-h path {
        stroke: #a5a5aa;
        stroke-width: 1;
    }

    .tick {
        stroke: #5a62a8;
        stroke-width: 0.7;
    }

    .workspace text {
        fill: #2a3487;
    }

    .canvas .sheet-name {
        fill: #eee;
        font-family: "Liberation Serif", "Noto Sans CJK SC", serif;
        font-size: 9px;
    }

    .canvas .sheet-info {
        fill: #c8c832;
        font-size: 8px;
        font-weight: bold;
    }

    .canvas .axis-name {
        fill: #999;
    }

    .axis {
        fill: none;
        stroke: #777;
        stroke-width: 0.7;
    }

    .marks {
        fill: none;
        stroke: #14c8b4;
        stroke-width: 0.7;
        stroke-dasharray: 3 1;
    }

    .label-mark {
        fill: none;
        stroke: #14d2c8;
        stroke-width: 1.3;
        stroke-dasharray: 2 0.6;
    }

    .actions {
        display: flex;
        align-items: center;
        flex: none;
        height: 13px;
        background: #f0f0f0;
    }

    .cluster {
        display: flex;
        align-items: center;
        gap: 4px;
        padding: 0 3px;
        border-left: 1px solid #bdbdc0;
    }

    .cluster:first-child {
        gap: 3px;
    }

    .cluster button, .cluster label {
        display: flex;
        align-items: center;
        gap: 2px;
    }

    .cluster button:disabled {
        color: #77777a;
    }

    .cluster .short {
        width: 20px;
    }

    .cluster .long {
        width: 30px;
    }

    .cluster .on {
        height: 9px;
        padding: 0 1px;
        border: 1px solid #4d9be0;
        background: #b9d3ea;
    }

    .tabs {
        display: flex;
        align-items: center;
        flex: none;
        height: 9px;
        padding-left: 8px;
        border-bottom: 1px solid #9fa3aa;
        background: #fafafa;
        gap: 2px;
    }

    .tabs button {
        display: flex;
        align-items: center;
        gap: 1px;
        width: 20px;
        height: 8px;
    }

    .tabs .active {
        background: #9cc4ee;
    }

    .scroll-h {
        display: flex;
        align-items: center;
        justify-content: space-between;
        flex: 1;
        height: 9px;
        margin-left: 52px;
        background: #f0f0f0;
    }

    .scroll-v svg, .scroll-h svg {
        width: 6px;
        height: 6px;
        padding: 1px 0;
    }

    .log {
        display: flex;
        flex-direction: column;
        justify-content: flex-end;
        flex: none;
        box-sizing: border-box;
        height: 51px;
        padding: 0 4px 2px;
        border-bottom: 1px solid #a9acb4;
        overflow: hidden;
        color: #000;
    }

    .layouts .toolbar {
        padding: 0 5px 0 2px;
    }

    .layout-item {
        display: flex;
        gap: 2px;
        height: 32px;
        background: #a4caf0;
    }

    .layout-item > input {
        align-self: center;
        background: none;
        border-color: #7796b8;
    }

    .preview {
        position: relative;
        align-self: center;
        width: 25px;
        height: 8px;
    }

    .preview > svg {
        display: block;
        width: 24px;
    }

    .preview > .cursor {
        position: absolute;
        left: -6px;
        top: -8px;
        width: 26px;
    }

    .layout-item .info {
        justify-content: center;
        color: #4a5a70;
    }

    .spread {
        display: flex;
        gap: 16px;
    }

    em {
        font-style: normal;
    }

    .item-tools {
        display: flex;
        flex-direction: column;
        gap: 2px;
        margin-left: auto;
        padding-top: 1px;
    }

    .status {
        display: flex;
        align-items: center;
        justify-content: flex-end;
        gap: 5px;
        flex: none;
        height: 8px;
        background: linear-gradient(#dde0e5, #b9bec8);
    }

    .status label {
        padding-left: 4px;
        border-left: 1px solid #9a9fa9;
        color: #2b4580;
    }

    .status select {
        width: 21px;
        height: 8px;
    }
</style>
